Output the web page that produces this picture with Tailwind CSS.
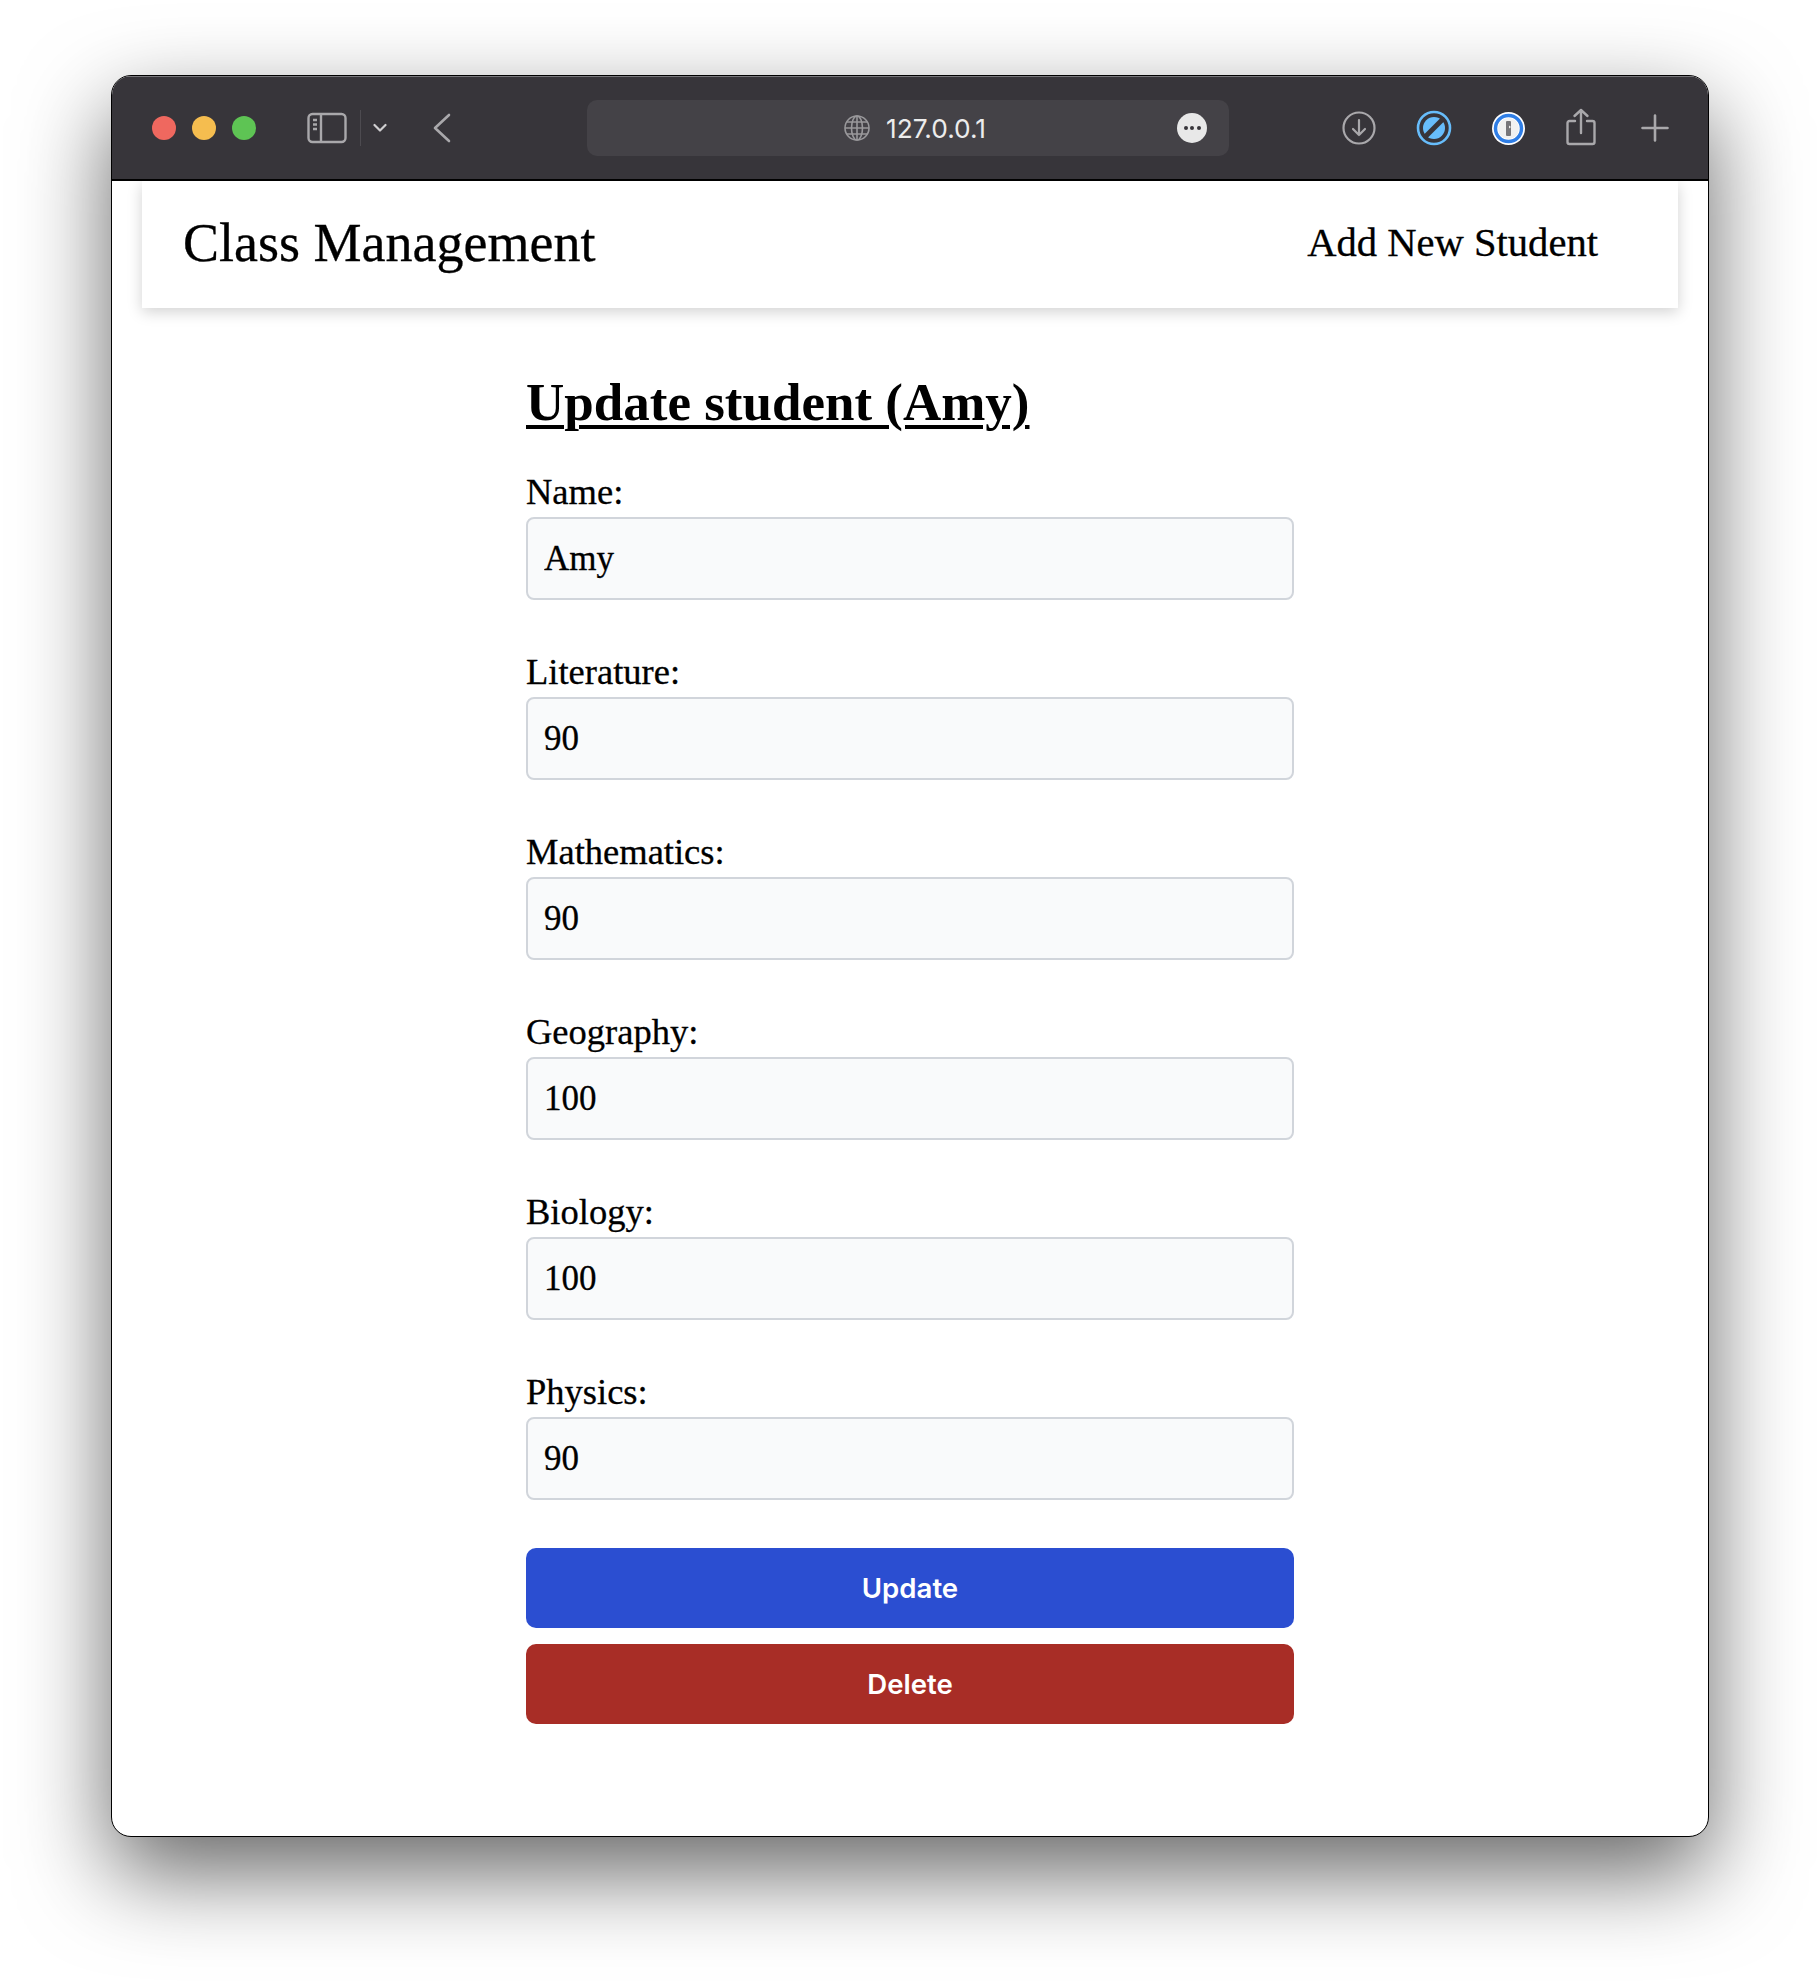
<!DOCTYPE html>
<html lang="en">
<head>
  <meta charset="UTF-8" />
  <meta name="viewport" content="width=device-width, initial-scale=1" />
  <title>Class Management</title>
  <script src="https://cdn.jsdelivr.net/npm/@tailwindcss/browser@4"></script>
</head>
<body class="bg-white h-[1984px] pt-[75px] pl-[111px] overflow-hidden font-['Liberation_Serif',serif] text-black">
  <div class="w-[1598px] h-[1762px] rounded-[20px] bg-white border border-black shadow-[0_36px_90px_rgba(0,0,0,0.6)] overflow-hidden">

    <!-- browser toolbar -->
    <div class="relative h-[105px] bg-[#37353a] border-t border-[#77767a] border-b-2 border-b-black flex items-center font-['Inter',sans-serif]">
      <div class="flex gap-4 ml-[40px]">
        <span class="w-6 h-6 rounded-full bg-[#ef685f]"></span>
        <span class="w-6 h-6 rounded-full bg-[#f5bd4f]"></span>
        <span class="w-6 h-6 rounded-full bg-[#5ec454]"></span>
      </div>
      <svg class="ml-[51px]" width="40" height="32" viewBox="0 0 40 32" fill="none" stroke="#a9a8ab" stroke-width="2.4">
        <rect x="1.5" y="2" width="37" height="28" rx="4" />
        <path d="M14 2v28M6 8h4M6 12.500h4M6 17h4" />
      </svg>
      <span class="ml-[13px] w-px h-9 bg-[#4d4b50]"></span>
      <svg class="ml-[12px]" width="14" height="10" viewBox="0 0 14 10" fill="none" stroke="#d0cfd1" stroke-width="2.200" stroke-linecap="round" stroke-linejoin="round">
        <path d="M1.500 2l5.500 5.500L12.500 2" />
      </svg>
      <svg class="ml-[46px]" width="18" height="30" viewBox="0 0 18 30" fill="none" stroke="#a9a8ab" stroke-width="2.600" stroke-linecap="round" stroke-linejoin="round">
        <path d="M16 2L2 15l14 13" />
      </svg>

      <div class="absolute left-[475px] top-[23px] w-[642px] h-[56px] rounded-[10px] bg-[#444247] flex items-center">
        <svg class="ml-[257px]" width="26" height="26" viewBox="0 0 26 26" fill="none" stroke="#99989b" stroke-width="1.600">
          <circle cx="13" cy="13" r="12" />
          <ellipse cx="13" cy="13" rx="5.500" ry="12" />
          <path d="M13 1v24M1 13h24M3 7h20M3 19h20" />
        </svg>
        <span class="ml-[16px] mt-[2px] text-[26.300px] text-[#ececec] leading-none">127.0.0.1</span>
        <span class="ml-auto mr-[22px] w-[30px] h-[30px] rounded-full bg-[#e8e8e8] flex items-center justify-center gap-[2.500px]">
          <i class="w-[4px] h-[4px] rounded-full bg-[#37353a]"></i>
          <i class="w-[4px] h-[4px] rounded-full bg-[#37353a]"></i>
          <i class="w-[4px] h-[4px] rounded-full bg-[#37353a]"></i>
        </span>
      </div>

      <div class="absolute left-[1230px] top-[0px] h-full flex items-center">
        <svg width="34" height="34" viewBox="0 0 34 34" fill="none" stroke="#a9a8ab" stroke-width="2.200" stroke-linecap="round" stroke-linejoin="round">
          <circle cx="17" cy="17" r="15.500" />
          <path d="M17 9v15M11 18l6 6 6-6" />
        </svg>
        <svg class="ml-[40px]" width="36" height="36" viewBox="0 0 36 36">
          <circle cx="18" cy="18" r="16" fill="none" stroke="#67bdfb" stroke-width="2.600" />
          <circle cx="18" cy="18" r="11" fill="#67bdfb" />
          <path d="M9 27L27 9" stroke="#37353a" stroke-width="5" />
        </svg>
        <svg class="ml-[40px]" width="33" height="33" viewBox="0 0 33 33">
          <circle cx="16.500" cy="16.500" r="16.500" fill="#ffffff" />
          <circle cx="16.500" cy="16.500" r="13" fill="none" stroke="#2f7ee6" stroke-width="3.500" />
          <circle cx="16.500" cy="16.500" r="10.500" fill="#f1f1f1" />
          <rect x="14" y="9" width="5" height="15" rx="1" fill="#77767a" />
          <path d="M17 13.500l2 1.500-2 1.500z" fill="#f1f1f1" />
        </svg>
        <svg class="ml-[41px] -mt-[3px]" width="30" height="38" viewBox="0 0 30 38" fill="none" stroke="#a9a8ab" stroke-width="2.400" stroke-linecap="round" stroke-linejoin="round">
          <path d="M9 13H3.500a2 2 0 0 0-2 2v19a2 2 0 0 0 2 2h23a2 2 0 0 0 2-2V15a2 2 0 0 0-2-2H21" />
          <path d="M15 25V2M8.500 8L15 2l6.500 6" />
        </svg>
        <svg class="ml-[45px]" width="28" height="28" viewBox="0 0 28 28" fill="none" stroke="#a9a8ab" stroke-width="2.600" stroke-linecap="round">
          <path d="M14 1.500v25M1.500 14h25" />
        </svg>
      </div>
    </div>

    <!-- page -->
    <nav class="mx-[30px] h-[127px] bg-white shadow-[0_4px_14px_rgba(0,0,0,0.18)] flex items-center justify-between pl-[41px] pr-[80px] [-webkit-text-stroke:0.3px_black]">
      <a href="#" class="text-[54px] leading-none -mt-[3px]">Class Management</a>
      <a href="#" class="text-[40.600px] leading-none -mt-[2px]">Add New Student</a>
    </nav>

    <main class="w-[768px] mx-auto pt-[67px]">
      <h1 class="text-[53px] leading-[54px] font-bold underline decoration-[4px] underline-offset-[5px]">Update student (Amy)</h1>
      <form class="mt-[44px] [-webkit-text-stroke:0.3px_black]">
        <label class="block text-[36.500px] leading-[38px]">Name:</label>
        <input value="Amy" class="block w-full h-[83px] mt-[6px] px-[16px] rounded-[8px] border-2 border-[#d1d5db] bg-[#f9fafb] text-[35px]" />

        <label class="block text-[36.500px] leading-[38px] mt-[53px]">Literature:</label>
        <input value="90" class="block w-full h-[83px] mt-[6px] px-[16px] rounded-[8px] border-2 border-[#d1d5db] bg-[#f9fafb] text-[35px]" />

        <label class="block text-[36.500px] leading-[38px] mt-[53px]">Mathematics:</label>
        <input value="90" class="block w-full h-[83px] mt-[6px] px-[16px] rounded-[8px] border-2 border-[#d1d5db] bg-[#f9fafb] text-[35px]" />

        <label class="block text-[36.500px] leading-[38px] mt-[53px]">Geography:</label>
        <input value="100" class="block w-full h-[83px] mt-[6px] px-[16px] rounded-[8px] border-2 border-[#d1d5db] bg-[#f9fafb] text-[35px]" />

        <label class="block text-[36.500px] leading-[38px] mt-[53px]">Biology:</label>
        <input value="100" class="block w-full h-[83px] mt-[6px] px-[16px] rounded-[8px] border-2 border-[#d1d5db] bg-[#f9fafb] text-[35px]" />

        <label class="block text-[36.500px] leading-[38px] mt-[53px]">Physics:</label>
        <input value="90" class="block w-full h-[83px] mt-[6px] px-[16px] rounded-[8px] border-2 border-[#d1d5db] bg-[#f9fafb] text-[35px]" />

        <button type="button" class="block w-full h-[80px] mt-[48px] pt-[1px] rounded-[10px] bg-[#2b4ed1] text-white text-[27.600px] font-semibold font-['Inter',sans-serif] [-webkit-text-stroke:0]">Update</button>
        <button type="button" class="block w-full h-[80px] mt-[16px] pt-[1px] rounded-[10px] bg-[#a82d26] text-white text-[27.600px] font-semibold font-['Inter',sans-serif] [-webkit-text-stroke:0]">Delete</button>
      </form>
    </main>
  </div>
</body>
</html>
